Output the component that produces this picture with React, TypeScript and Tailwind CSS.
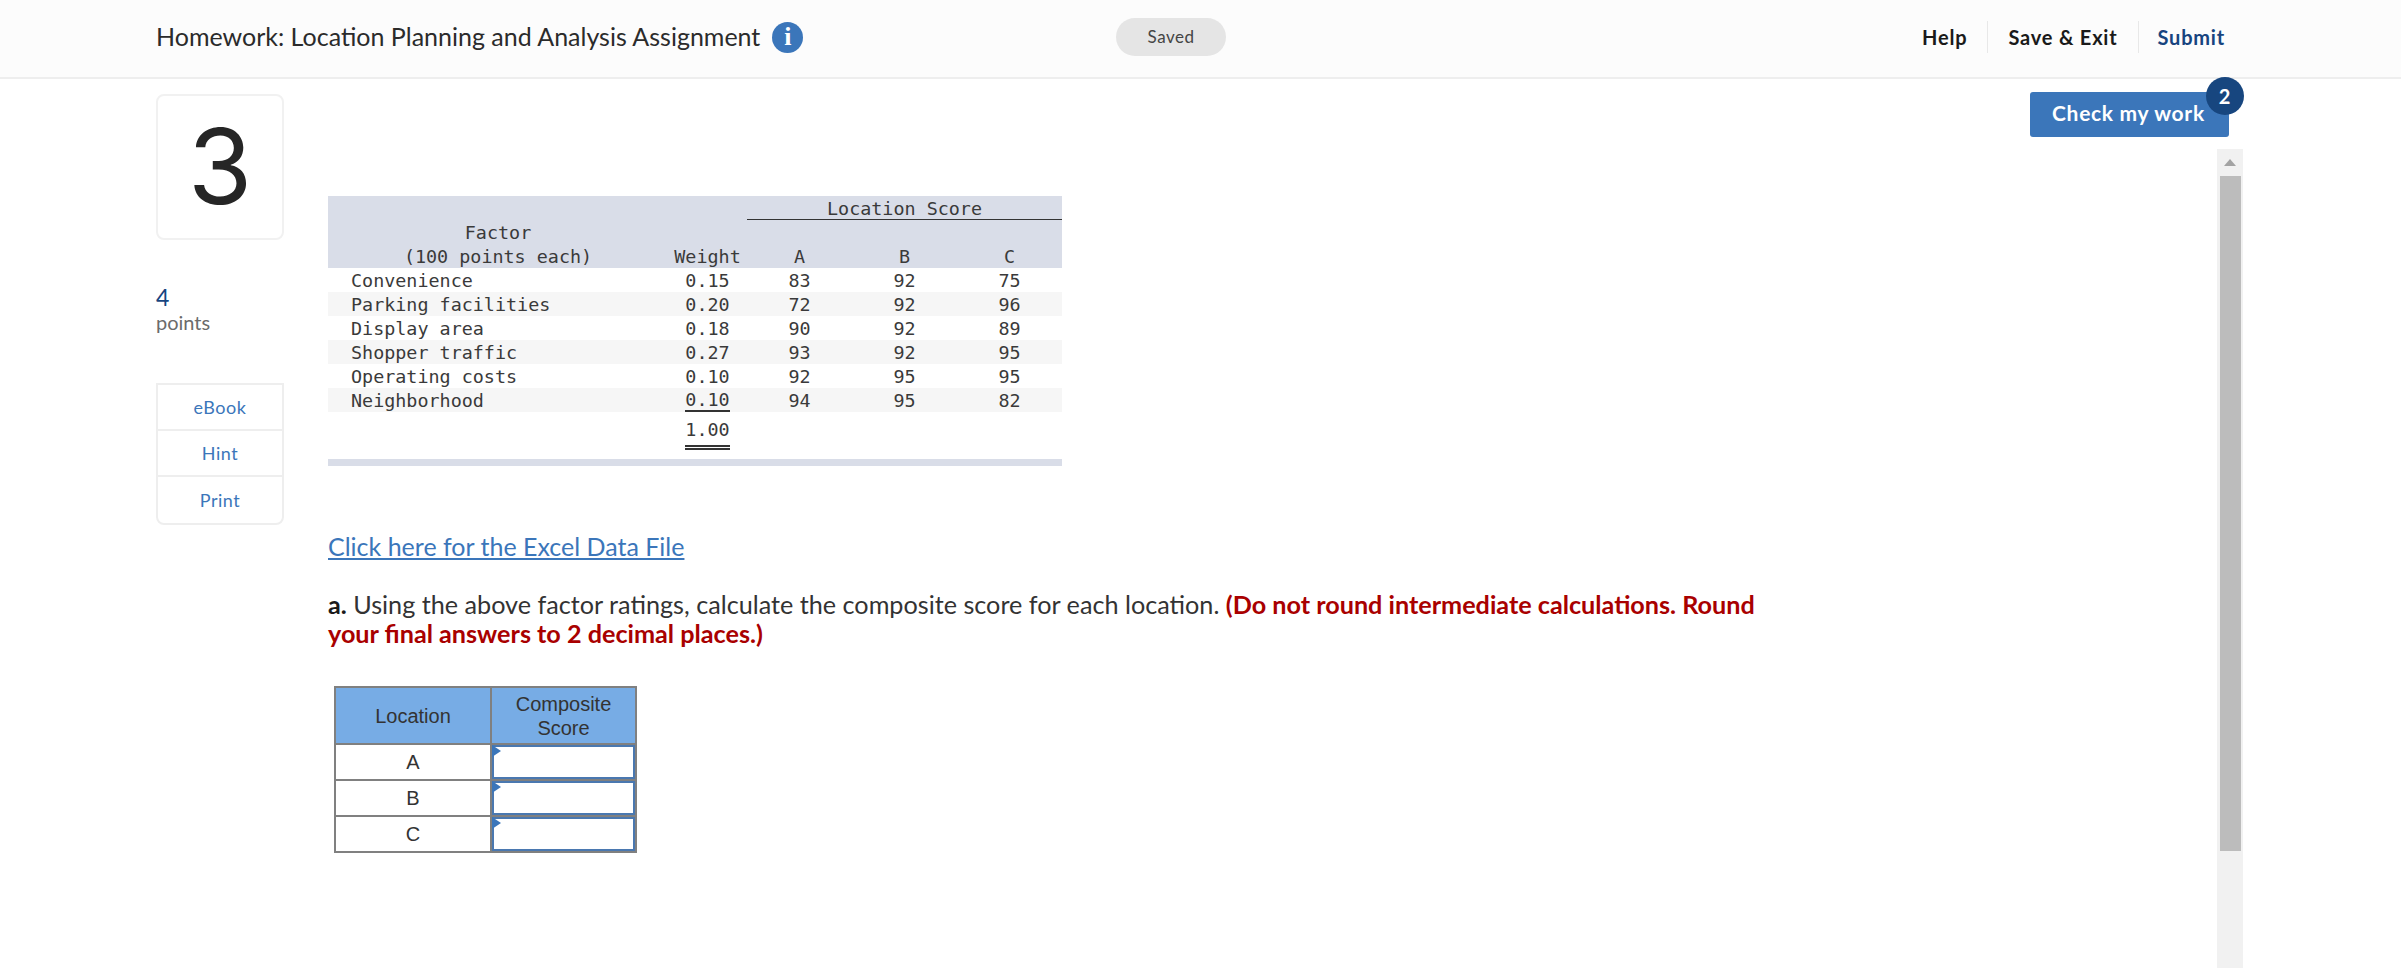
import { Fragment } from "react";

const factors = [
  { name: "Convenience", weight: "0.15", a: "83", b: "92", c: "75" },
  { name: "Parking facilities", weight: "0.20", a: "72", b: "92", c: "96" },
  { name: "Display area", weight: "0.18", a: "90", b: "92", c: "89" },
  { name: "Shopper traffic", weight: "0.27", a: "93", b: "92", c: "95" },
  { name: "Operating costs", weight: "0.10", a: "92", b: "95", c: "95" },
  { name: "Neighborhood", weight: "0.10", a: "94", b: "95", c: "82" },
];

const sans = "font-['Lato','Open_Sans',sans-serif]";

function Header() {
  return (
    <header className="h-[79px] bg-[#fcfcfc] border-b-2 border-[#eeeeee] flex items-center pb-[3px] pl-[156px] pr-[176px]">
      <div className="w-[960px] flex items-center gap-[12px] text-[25px] text-[#2b2b2b]">
        <span>Homework: Location Planning and Analysis Assignment</span>
        <span className="w-[31px] h-[31px] rounded-full bg-[#3b76ba] text-white flex items-center justify-center font-['Liberation_Serif',serif] font-bold text-[26px] leading-none">
          i
        </span>
      </div>
      <div className="w-[110px] h-[38px] rounded-full bg-[#e5e5e5] flex items-center justify-center text-[17px] tracking-[0.5px] text-[#444444]">
        Saved
      </div>
      <nav className="ml-auto flex items-center text-[20px] tracking-[0.8px] font-bold text-[#1a1a1a]">
        <span className="pr-[20px]">Help</span>
        <span className="h-[32px] px-[20px] border-l border-r border-[#e8e8e8] flex items-center">Save &amp; Exit</span>
        <span className="pl-[19px] text-[#17447f]">Submit</span>
      </nav>
    </header>
  );
}

function Sidebar() {
  return (
    <aside className="w-[128px] pt-[15px] shrink-0">
      <div className="h-[146px] pb-[3px] rounded-[8px] border-2 border-[#f1f1f1] flex items-center justify-center text-[104px] leading-none font-['Inter',sans-serif] font-normal text-[#262626]">
        3
      </div>
      <div className="mt-[44px] text-[23px] leading-[26px] text-[#17447f]">4</div>
      <div className="text-[20px] leading-[24px] text-[#6b6b6b]">points</div>
      <div className="mt-[49px] border-2 border-[#eeeeee] rounded-b-[8px] text-[18px] tracking-[0.5px] text-[#3b76ba] text-center">
        <div className="h-[46px] flex items-center justify-center border-b-2 border-[#eeeeee]">eBook</div>
        <div className="h-[46px] flex items-center justify-center border-b-2 border-[#eeeeee]">Hint</div>
        <div className="h-[46px] flex items-center justify-center">Print</div>
      </div>
    </aside>
  );
}

function FactorTable() {
  const head = "bg-[#d9dde8] h-[24px]";
  return (
    <div className="w-[734px] font-['DejaVu_Sans_Mono',monospace] text-[18.4px] leading-[26px] text-[#3a3a3a] grid grid-cols-[340px_79px_105px_105px_105px] text-center">
      <div className={`col-span-2 ${head}`} />
      <div className={`col-span-3 ${head}`}>
        <div className="h-[25px] border-b-2 border-[#333333]">Location Score</div>
      </div>
      <div className={head}>Factor</div>
      <div className={`col-span-4 ${head}`} />
      <div className={head}>(100 points each)</div>
      <div className={head}>Weight</div>
      <div className={head}>A</div>
      <div className={head}>B</div>
      <div className={head}>C</div>
      {factors.map((f, i) => {
        const bg = i % 2 === 1 ? "bg-[#f6f6f6] h-[24px]" : "bg-white h-[24px]";
        return (
          <Fragment key={f.name}>
            <div className={`${bg} text-left pl-[23px]`}>{f.name}</div>
            <div className={`${bg} flex justify-center`}>
              <span className={i === 5 ? "border-b-2 border-[#333333] h-[24px] leading-[24px]" : ""}>{f.weight}</span>
            </div>
            <div className={bg}>{f.a}</div>
            <div className={bg}>{f.b}</div>
            <div className={bg}>{f.c}</div>
          </Fragment>
        );
      })}
      <div className="h-[47px]" />
      <div className="h-[47px] flex justify-center pt-[7px]">
        <span className="h-[31px] border-b-[5px] border-double border-[#333333] leading-[22px]">1.00</span>
      </div>
      <div className="col-span-3 h-[47px]" />
      <div className="col-span-5 h-[7px] bg-[#d9dde8]" />
    </div>
  );
}

function ScoreTable() {
  const cell = "border-2 border-[#808080]";
  return (
    <table className="ml-[6px] w-[301px] table-fixed border-collapse font-['Liberation_Sans',sans-serif] text-[20px] leading-[24px] text-[#333333] text-center">
      <colgroup>
        <col className="w-[156px]" />
        <col className="w-[145px]" />
      </colgroup>
      <thead>
        <tr className="h-[57px] bg-[#77ace5]">
          <th className={`${cell} font-normal`}>Location</th>
          <th className={`${cell} font-normal`}>
            Composite
            <br />
            Score
          </th>
        </tr>
      </thead>
      <tbody>
        {["A", "B", "C"].map((l) => (
          <tr key={l} className="h-[36px]">
            <td className={cell}>{l}</td>
            <td className={`${cell} relative p-0`}>
              <div className="h-[34px] border-2 border-[#4a78b0]" />
              <span className="absolute left-0 top-0 w-0 h-0 border-y-[6px] border-y-transparent border-l-[9px] border-l-[#3b76ba]" />
            </td>
          </tr>
        ))}
      </tbody>
    </table>
  );
}

function RightColumn() {
  return (
    <div className="flex-1 flex flex-col items-end pr-[158px] h-full">
      <button className="relative mt-[13px] mr-[14px] w-[199px] h-[45px] pb-[3px] rounded-[3px] bg-[#3b76ba] text-white text-[21px] tracking-[0.7px] font-bold text-left pl-[22px]">
        Check my work
        <span className="absolute -top-[15px] -right-[15px] w-[38px] h-[38px] rounded-full bg-[#17467f] flex items-center justify-center text-[20px]">
          2
        </span>
      </button>
      <div className="mt-[12px] w-[26px] flex-1 bg-[#f1f1f1] flex flex-col items-center">
        <div className="h-[27px] flex items-center justify-center">
          <span className="w-0 h-0 border-x-[6px] border-x-transparent border-b-[7px] border-b-[#a3a3a3]" />
        </div>
        <div className="w-[21px] h-[675px] bg-[#bcbcbc]" />
      </div>
    </div>
  );
}

export default function App() {
  return (
    <div className={`h-[968px] w-[2401px] overflow-hidden bg-white ${sans}`}>
      <Header />
      <main className="h-[889px] flex pl-[156px]">
        <Sidebar />
        <section className="ml-[44px] w-[1480px] shrink-0 pt-[117px]">
          <FactorTable />
          <a className="block mt-[65px] text-[25px] leading-[30px] text-[#3b76ba] underline">
            Click here for the Excel Data File
          </a>
          <p className="mt-[29px] w-[1480px] text-[25.2px] leading-[29px] text-[#333333]">
            <b className="text-[#1a1a1a]">a.</b> Using the above factor ratings, calculate the composite score for each location.{" "}
            <b className="text-[#a90000]">
              (Do not round intermediate calculations. Round
              <br />
              your final answers to 2 decimal places.)
            </b>
          </p>
          <div className="mt-[38px]">
            <ScoreTable />
          </div>
        </section>
        <RightColumn />
      </main>
    </div>
  );
}
